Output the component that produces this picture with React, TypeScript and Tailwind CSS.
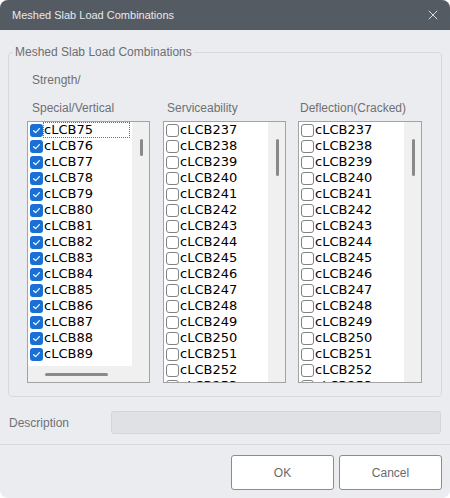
import React from 'react';
import { X } from 'lucide-react';

const UI = '"Liberation Sans", Arial, sans-serif';
const LIST = '"DejaVu Sans", Verdana, sans-serif';

function Check({ checked }: { checked: boolean }) {
  if (checked) {
    return (
      <span className="w-[13px] h-[13px] shrink-0 rounded-[3px] bg-[#1a6fd4] flex items-center justify-center">
        <svg width="13" height="13" viewBox="0 0 13 13">
          <path d="M3.6 6.7 L5.6 8.6 L9.4 4.6" fill="none" stroke="#ffffff" strokeWidth="1.2" strokeLinecap="round" strokeLinejoin="round" />
        </svg>
      </span>
    );
  }
  return <span className="w-[13px] h-[13px] shrink-0 rounded-[3px] border border-[#828282] bg-white" />;
}

interface ListProps {
  items: string[];
  checked: boolean;
  focusFirst?: boolean;
  hScroll?: boolean;
  thumbH: number;
  width: string;
}

function CheckList({ items, checked, focusFirst, hScroll, thumbH, width }: ListProps) {
  return (
    <div className={`${width} h-[262px] border border-[#a3a3a3] bg-[#f0f0f0] flex flex-col`}>
      <div className="flex flex-1 min-h-0">
        <div className="flex-1 bg-white overflow-hidden">
          {items.map((name, i) => (
            <div key={name} className="h-4 flex items-center pl-[2px]">
              <Check checked={checked} />
              <span
                className={`mr-[2px] flex-1 h-4 flex items-center text-[13px] leading-4 text-black border border-dotted ${
                  focusFirst && i === 0 ? 'border-[#707070]' : 'border-transparent'
                }`}
                style={{ fontFamily: LIST }}
              >
                {name}
              </span>
            </div>
          ))}
        </div>
        <div className="w-[17px] shrink-0 flex justify-center pt-[17px] pl-[1px]">
          <div className="w-[3px] rounded-full bg-[#8a8a8a]" style={{ height: thumbH }} />
        </div>
      </div>
      {hScroll && (
        <div className="h-4 shrink-0 flex items-center pl-[17px]">
          <div className="w-[63px] h-[3px] rounded-full bg-[#8a8a8a]" />
        </div>
      )}
    </div>
  );
}

export default function App() {
  const strength = Array.from({ length: 15 }, (_, i) => `cLCB${75 + i}`);
  const service = Array.from({ length: 17 }, (_, i) => `cLCB${237 + i}`);

  return (
    <div className="w-[450px] h-[498px] bg-[#ebecf0] rounded-lg overflow-hidden flex flex-col" style={{ fontFamily: UI }}>
      {/* title bar */}
      <div className="h-[30px] shrink-0 bg-[#555b63] flex items-center justify-between pl-3 pr-[9px]">
        <span className="text-[11px] text-[#e8e9eb]">Meshed Slab Load Combinations</span>
        <X size={16} strokeWidth={1.5} className="text-[#d6d8db]" />
      </div>

      <fieldset className="mx-2 mt-[14px] border border-[#d6d8dc] rounded-[4px]">
        <legend className="ml-[4px] px-[2px] text-[12px] leading-4 text-[#6e6e6e]">Meshed Slab Load Combinations</legend>
        <div className="flex pl-[18px] pb-[13px] text-[12px] leading-4 text-[#707070]">
          <div className="w-[123px] flex flex-col">
            <div className="h-[56px] flex flex-col justify-end pl-[5px] mb-[5px]">
              <span>Strength/</span>
              <span className="mt-[12px]">Special/Vertical</span>
            </div>
            <CheckList items={strength} checked focusFirst hScroll thumbH={17} width="w-[123px]" />
          </div>
          <div className="w-[123px] ml-[13px] flex flex-col">
            <div className="h-[56px] flex flex-col justify-end pl-[4px] mb-[5px]">
              <span>Serviceability</span>
            </div>
            <CheckList items={service} checked={false} thumbH={37} width="w-[123px]" />
          </div>
          <div className="w-[124px] ml-[12px] flex flex-col">
            <div className="h-[56px] flex flex-col justify-end pl-[2px] mb-[5px]">
              <span>Deflection(Cracked)</span>
            </div>
            <CheckList items={service} checked={false} thumbH={37} width="w-[124px]" />
          </div>
        </div>
      </fieldset>

      {/* description */}
      <div className="flex items-center mt-[14px] pl-[9px]">
        <span className="w-[102px] text-[12px] text-[#707070]">Description</span>
        <div className="w-[330px] h-[23px] bg-[#dfe1e5] border border-[#d3d5d9] rounded-[3px]" />
      </div>

      <div className="mt-[10px] h-px bg-[#d6d8dc]" />

      {/* buttons */}
      <div className="flex justify-end gap-[5px] pt-[10px] pr-[8px]">
        <button className="w-[103px] h-[35px] bg-white border border-[#8c8c8c] rounded-[3px] text-[12px] text-[#6a6a6a]">OK</button>
        <button className="w-[103px] h-[35px] bg-white border border-[#8c8c8c] rounded-[3px] text-[12px] text-[#6a6a6a]">Cancel</button>
      </div>
    </div>
  );
}
